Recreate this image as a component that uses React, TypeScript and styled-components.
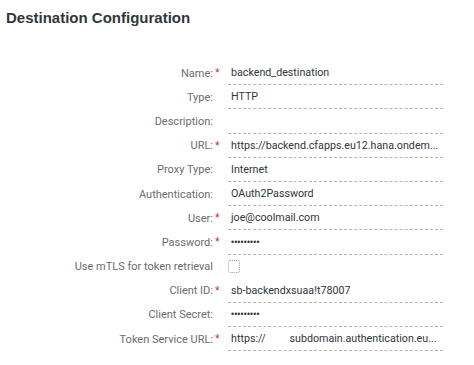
import React from "react"
import styled, { createGlobalStyle } from "styled-components"

const GlobalStyle = createGlobalStyle`
  body {
    margin: 0;
    background: #ffffff;
    font-family: "Liberation Sans", Arial, sans-serif;
  }
`

const Page = styled.div`
  padding: 9px 0 0 6px;
`

const Title = styled.h2`
  margin: 0 0 34px;
  font-size: 15px;
  font-weight: bold;
  color: #32363a;
  line-height: 18px;
`

const Form = styled.div`
  display: grid;
  grid-template-columns: 207px 15px 215px;
  grid-auto-rows: 24.2px;
`

const Label = styled.div`
  display: flex;
  align-items: center;
  justify-content: flex-end;
  font-family: Roboto, "Liberation Sans", sans-serif;
  font-size: 11px;
  color: #6a6d70;
  white-space: nowrap;
`

const Star = styled.span`
  display: flex;
  align-items: center;
  padding-left: 2px;
  font-size: 12px;
  color: #c22a55;
`

const Value = styled.div<{ $line?: boolean }>`
  display: flex;
  align-items: center;
  padding: 0 3px;
  font-family: Roboto, "Liberation Sans", sans-serif;
  font-size: 10.7px;
  color: #32363a;
  white-space: pre;
  overflow: hidden;
  border-bottom: ${(p) => (p.$line ? "1px dashed #b3b6b9" : "none")};
`

const Dots = styled.span`
  font-family: "Liberation Sans", sans-serif;
  font-size: 8.5px;
  letter-spacing: 0.2px;
  color: #32363a;
`

const Check = styled.span`
  width: 10px;
  height: 11px;
  margin-left: -3px;
  border: 1px dotted #9a9da0;
  border-radius: 2px;
`

type Row = { label: string; value?: string; required?: boolean; kind?: "text" | "secret" | "check" }

const rows: Row[] = [
  { label: "Name:", value: "backend_destination", required: true },
  { label: "Type:", value: "HTTP" },
  { label: "Description:", value: "" },
  { label: "URL:", value: "https://backend.cfapps.eu12.hana.ondem...", required: true },
  { label: "Proxy Type:", value: "Internet" },
  { label: "Authentication:", value: "OAuth2Password" },
  { label: "User:", value: "joe@coolmail.com", required: true },
  { label: "Password:", required: true, kind: "secret" },
  { label: "Use mTLS for token retrieval", kind: "check" },
  { label: "Client ID:", value: "sb-backendxsuaa!t78007", required: true },
  { label: "Client Secret:", kind: "secret" },
  { label: "Token Service URL:", value: "https://         subdomain.authentication.eu...", required: true },
]

const App = () => {
  return (
    <Page>
      <GlobalStyle />
      <Title>Destination Configuration</Title>
      <Form>
        {rows.map((r) => (
          <React.Fragment key={r.label}>
            <Label>{r.label}</Label>
            <Star>{r.required ? "*" : ""}</Star>
            {r.kind === "check" ? (
              <Value>
                <Check />
              </Value>
            ) : (
              <Value $line>
                {r.kind === "secret" ? <Dots>•••••••••</Dots> : r.value}
              </Value>
            )}
          </React.Fragment>
        ))}
      </Form>
    </Page>
  )
}

export default App
